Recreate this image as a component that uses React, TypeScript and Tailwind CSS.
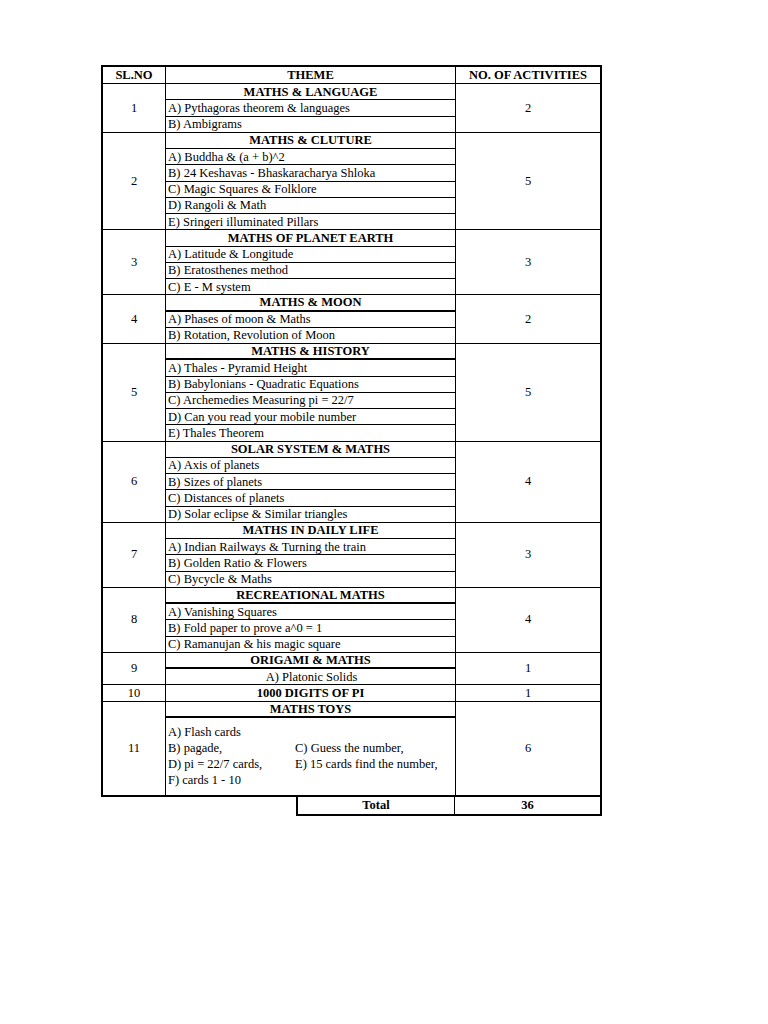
import React from "react";

type Group = {
  no: string;
  title: string;
  items: string[];
  count: string;
  thick?: boolean;
  center?: boolean;
};

const groups: Group[] = [
  { no: "1", title: "MATHS & LANGUAGE", items: ["A) Pythagoras theorem & languages", "B) Ambigrams"], count: "2" },
  {
    no: "2",
    title: "MATHS & CLUTURE",
    items: [
      "A) Buddha & (a + b)^2",
      "B) 24 Keshavas - Bhaskaracharya Shloka",
      "C) Magic Squares & Folklore",
      "D) Rangoli & Math",
      "E) Sringeri illuminated Pillars",
    ],
    count: "5",
  },
  {
    no: "3",
    title: "MATHS OF PLANET EARTH",
    items: ["A) Latitude & Longitude", "B) Eratosthenes method", "C) E - M system"],
    count: "3",
  },
  {
    no: "4",
    title: "MATHS & MOON",
    items: ["A) Phases of moon & Maths", "B) Rotation, Revolution of Moon"],
    count: "2",
    thick: true,
  },
  {
    no: "5",
    title: "MATHS & HISTORY",
    items: [
      "A) Thales - Pyramid Height",
      "B) Babylonians - Quadratic Equations",
      "C) Archemedies Measuring pi = 22/7",
      "D) Can you read your mobile number",
      "E) Thales Theorem",
    ],
    count: "5",
    thick: true,
  },
  {
    no: "6",
    title: "SOLAR SYSTEM & MATHS",
    items: ["A) Axis of planets", "B) Sizes of planets", "C) Distances of planets", "D) Solar eclipse & Similar triangles"],
    count: "4",
  },
  {
    no: "7",
    title: "MATHS IN DAILY LIFE",
    items: ["A) Indian Railways & Turning the train", "B) Golden Ratio & Flowers", "C) Bycycle & Maths"],
    count: "3",
  },
  {
    no: "8",
    title: "RECREATIONAL MATHS",
    items: ["A) Vanishing Squares", "B) Fold paper to prove a^0 = 1", "C) Ramanujan & his magic square"],
    count: "4",
    thick: true,
  },
  { no: "9", title: "ORIGAMI & MATHS", items: ["A) Platonic Solids"], count: "1", thick: true, center: true },
];

const App = () => {
  return (
    <div
      className="min-h-screen w-[768px] bg-white text-black text-[12.5px] pt-[65px] pl-[101px]"
      style={{ fontFamily: '"Liberation Serif", "Times New Roman", serif' }}
    >
      <div className="w-[501px] border-2 border-black">
        {/* header */}
        <div className="grid grid-cols-[63px_290px_1fr] h-[17px] border-b border-black font-bold">
          <div className="border-r border-black flex items-center justify-center leading-[14px]">SL.NO</div>
          <div className="border-r border-black flex items-center justify-center leading-[14px]">THEME</div>
          <div className="flex items-center justify-center leading-[14px]">NO. OF ACTIVITIES</div>
        </div>

        {groups.map((g) => (
          <div key={g.no} className="grid grid-cols-[63px_290px_1fr]">
            <div className="border-r border-b border-black flex items-center justify-center">{g.no}</div>
            <div className="border-r border-black flex flex-col">
              <div
                className={`h-[16.25px] flex items-center justify-center font-bold leading-[14px] border-black ${
                  g.thick ? "border-b-2" : "border-b"
                }`}
              >
                {g.title}
              </div>
              {g.items.map((it) => (
                <div
                  key={it}
                  className={`h-[16.25px] flex items-center leading-[14px] pl-[2px] border-b border-black ${
                    g.center ? "justify-center" : ""
                  }`}
                >
                  {it}
                </div>
              ))}
            </div>
            <div className="border-b border-black flex items-center justify-center">{g.count}</div>
          </div>
        ))}

        <div className="grid grid-cols-[63px_290px_1fr] h-[16.25px] border-b border-black">
          <div className="border-r border-black flex items-center justify-center leading-[14px]">10</div>
          <div className="border-r border-black flex items-center justify-center font-bold leading-[14px]">
            1000 DIGITS OF PI
          </div>
          <div className="flex items-center justify-center leading-[14px]">1</div>
        </div>

        <div className="grid grid-cols-[63px_290px_1fr]">
          <div className="border-r border-black flex items-center justify-center">11</div>
          <div className="border-r border-black flex flex-col">
            <div className="h-[16.25px] flex items-center justify-center font-bold leading-[14px] border-b-2 border-black">
              MATHS TOYS
            </div>
            <div className="h-[77px] flex flex-col justify-center pl-[2px] leading-[16px]">
              <div>A) Flash cards</div>
              <div className="grid grid-cols-[127px_1fr]">
                <span>B) pagade,</span>
                <span>C) Guess the number,</span>
              </div>
              <div className="grid grid-cols-[127px_1fr]">
                <span>D) pi = 22/7 cards,</span>
                <span>E) 15 cards find the number,</span>
              </div>
              <div>F) cards 1 - 10</div>
            </div>
          </div>
          <div className="flex items-center justify-center">6</div>
        </div>
      </div>

      {/* total row */}
      <div className="ml-[195px] w-[306px] h-[19px] border-2 border-t-0 border-black grid grid-cols-[157px_1fr] font-bold">
        <div className="border-r border-black flex items-center justify-center leading-[14px]">Total</div>
        <div className="flex items-center justify-center leading-[14px]">36</div>
      </div>
    </div>
  );
};

export default App;
